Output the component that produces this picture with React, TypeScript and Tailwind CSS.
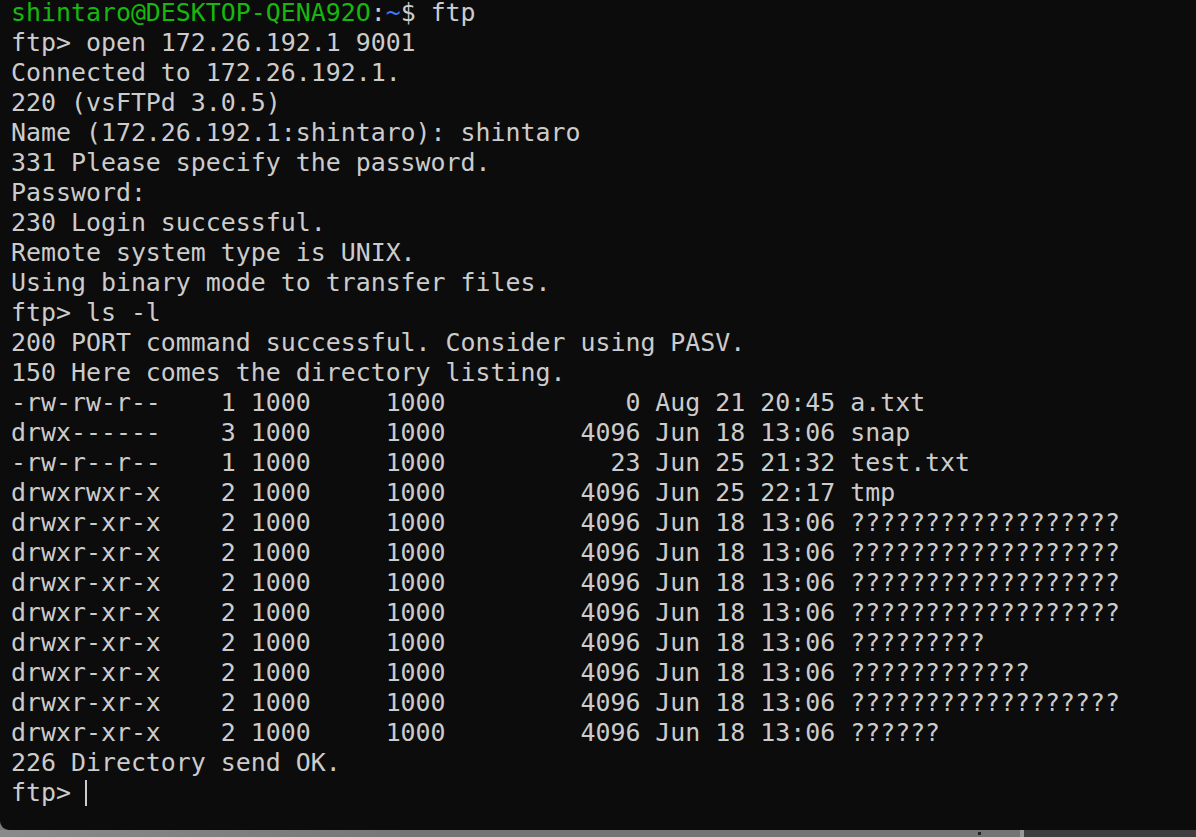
const lines: string[] = [
  "ftp> open 172.26.192.1 9001",
  "Connected to 172.26.192.1.",
  "220 (vsFTPd 3.0.5)",
  "Name (172.26.192.1:shintaro): shintaro",
  "331 Please specify the password.",
  "Password:",
  "230 Login successful.",
  "Remote system type is UNIX.",
  "Using binary mode to transfer files.",
  "ftp> ls -l",
  "200 PORT command successful. Consider using PASV.",
  "150 Here comes the directory listing.",
];

const files: [string, string, string, string, string][] = [
  ["-rw-rw-r--", "1", "0", "Aug 21 20:45", "a.txt"],
  ["drwx------", "3", "4096", "Jun 18 13:06", "snap"],
  ["-rw-r--r--", "1", "23", "Jun 25 21:32", "test.txt"],
  ["drwxrwxr-x", "2", "4096", "Jun 25 22:17", "tmp"],
  ["drwxr-xr-x", "2", "4096", "Jun 18 13:06", "??????????????????"],
  ["drwxr-xr-x", "2", "4096", "Jun 18 13:06", "??????????????????"],
  ["drwxr-xr-x", "2", "4096", "Jun 18 13:06", "??????????????????"],
  ["drwxr-xr-x", "2", "4096", "Jun 18 13:06", "??????????????????"],
  ["drwxr-xr-x", "2", "4096", "Jun 18 13:06", "?????????"],
  ["drwxr-xr-x", "2", "4096", "Jun 18 13:06", "????????????"],
  ["drwxr-xr-x", "2", "4096", "Jun 18 13:06", "??????????????????"],
  ["drwxr-xr-x", "2", "4096", "Jun 18 13:06", "??????"],
];

// vsftpd style: perms, links(4), owner(-8), group(-8), size(8)
function listing([perm, links, size, date, name]: [string, string, string, string, string]) {
  return `${perm} ${links.padStart(4)} 1000     1000     ${size.padStart(8)} ${date} ${name}`;
}

export default function App() {
  return (
    <div className="w-[1196px] h-[837px] bg-[#7b7b7b] flex flex-col overflow-hidden">
      <div
        className="h-[830px] bg-[#0c0c0c] rounded-bl-[9px] pl-[11px] text-[#cccccc] text-[24.9px] leading-[30px] whitespace-pre"
        style={{ fontFamily: '"DejaVu Sans Mono", "Liberation Mono", monospace' }}
      >
        <div className="leading-[26px]">
          <span className="text-[#16b80e]">shintaro@DESKTOP-QENA92O</span>
          <span>:</span>
          <span className="text-[#3b78ff]">~</span>
          <span>$ ftp</span>
        </div>
        <div className="pt-[2px]">
          {lines.map((l, i) => (
            <div key={i}>{l}</div>
          ))}
          {files.map((f, i) => (
            <div key={"f" + i}>{listing(f)}</div>
          ))}
          <div>226 Directory send OK.</div>
          <div className="flex items-center">
            <span>ftp&gt; </span>
            <span className="w-[2px] h-[26px] bg-[#cccccc] -ml-[1px]" />
          </div>
        </div>
      </div>
      <div className="flex-1 flex">
        <div className="w-[400px] bg-gradient-to-r from-[#8a8a8a] to-[#777777]" />
        <div className="w-[620px] bg-[#747474] relative">
          <span className="absolute left-[578px] top-[2px] w-[3px] h-[3px] bg-[#222]" />
        </div>
        <div className="w-[4px] bg-[#999]" />
        <div className="flex-1 bg-[#3e3e3e]" />
      </div>
    </div>
  );
}
